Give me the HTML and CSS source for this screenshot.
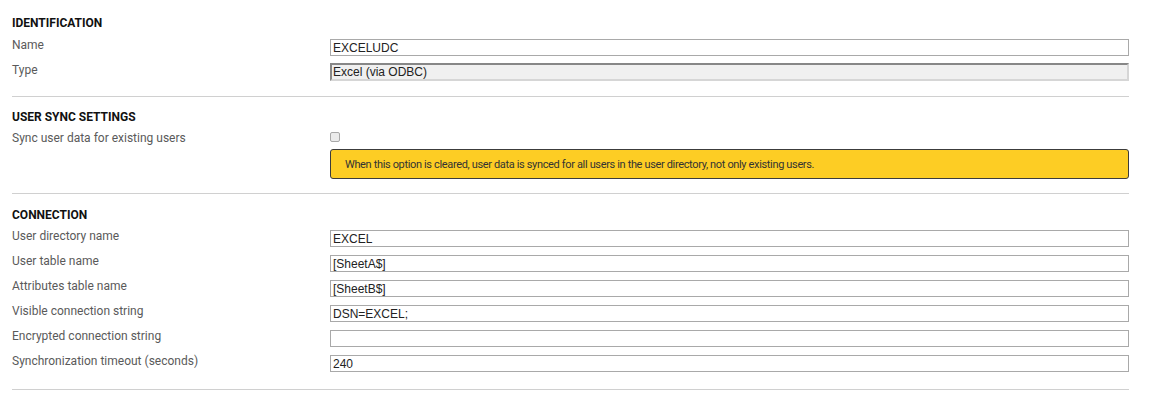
FILE: index.html
```html
<!DOCTYPE html>
<html>
<head>
<meta charset="utf-8">
<link rel="stylesheet" href="styles.css">
</head>
<body>
<div class="page">
  <section class="section s1">
    <h2 class="heading">IDENTIFICATION</h2>
    <div class="rows">
      <div class="row"><label class="label">Name</label><input class="field" type="text" value="EXCELUDC"></div>
      <div class="row"><label class="label">Type</label><input class="field readonly" type="text" value="Excel (via ODBC)" readonly></div>
    </div>
  </section>
  <section class="section s2">
    <h2 class="heading">USER SYNC SETTINGS</h2>
    <div class="row sync-row">
      <label class="label">Sync user data for existing users</label>
      <div class="control">
        <input class="check" type="checkbox">
        <div class="notice">When this option is cleared, user data is synced for all users in the user directory, not only existing users.</div>
      </div>
    </div>
  </section>
  <section class="section s3">
    <h2 class="heading">CONNECTION</h2>
    <div class="rows">
      <div class="row"><label class="label">User directory name</label><input class="field" type="text" value="EXCEL"></div>
      <div class="row"><label class="label">User table name</label><input class="field" type="text" value="[SheetA$]"></div>
      <div class="row"><label class="label">Attributes table name</label><input class="field" type="text" value="[SheetB$]"></div>
      <div class="row"><label class="label">Visible connection string</label><input class="field" type="text" value="DSN=EXCEL;"></div>
      <div class="row"><label class="label">Encrypted connection string</label><input class="field" type="text" value=""></div>
      <div class="row"><label class="label">Synchronization timeout (seconds)</label><input class="field" type="text" value="240"></div>
    </div>
  </section>
</div>
</body>
</html>
```
FILE: styles.css
```css
* { box-sizing: border-box; }
html, body { margin: 0; padding: 0; background: #fff; }
body { font-family: Roboto, "Liberation Sans", Arial, sans-serif; }
.page {
  width: 1117px;
  margin-left: 12px;
  padding-top: 3px;
}
.section {
  border-bottom: 1px solid #d0d0d0;
  padding: 12px 0 15px;
}
.s2 { padding-bottom: 14px; }
.s3 { padding-top: 13px; padding-bottom: 17px; }
.heading {
  margin: 0 0 8px;
  font-size: 12px;
  line-height: 16px;
  font-weight: 700;
  color: #111;
}
.s2 .heading { margin-bottom: 7px; }
.s3 .heading { margin-bottom: 7px; }
.rows {
  display: flex;
  flex-direction: column;
  gap: 8px;
}
.row {
  display: flex;
  align-items: flex-start;
}
.label {
  width: 318px;
  flex: none;
  font-size: 12px;
  line-height: 13px;
  color: #5a5a5a;
}
.field {
  flex: 1;
  height: 17px;
  margin: 0;
  padding: 0 2px;
  border: 1px solid #a9a9a9;
  background: #fff;
  font-family: "Liberation Sans", Arial, sans-serif;
  font-size: 12px;
  color: #222;
  outline: none;
}
.field.readonly {
  height: 18px;
  margin-top: -1px;
  background: #f0f0f0;
  border-top: 2px solid #878787;
  border-left: 2px solid #878787;
  border-right: 2px solid #d6d6d6;
  border-bottom: 2px solid #d6d6d6;
  padding-left: 1px;
}
.control {
  flex: 1;
  display: flex;
  flex-direction: column;
  align-items: flex-start;
}
.check {
  appearance: none;
  -webkit-appearance: none;
  width: 10px;
  height: 10px;
  margin: 0 0 7px 0;
  border: 1px solid #a8a8a8;
  border-radius: 2px;
  background: #ebebeb;
}
.notice {
  align-self: stretch;
  height: 30px;
  display: flex;
  align-items: center;
  padding-left: 14px;
  background: #fdcd24;
  border: 1px solid #3c3c3c;
  border-radius: 3px;
  font-size: 11px;
  letter-spacing: -0.35px;
  color: #333;
}
```
